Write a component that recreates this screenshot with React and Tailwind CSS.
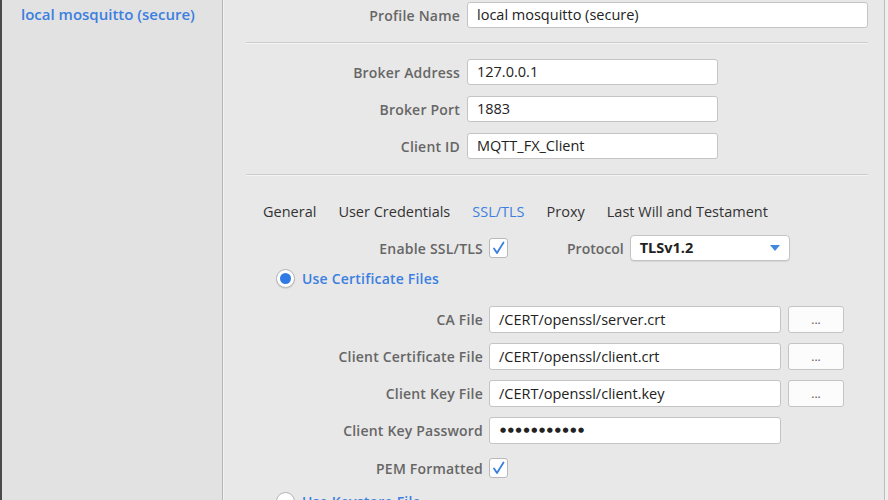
export default function App() {
  const font = { fontFamily: '"Lucida Grande", "Open Sans", "DejaVu Sans", sans-serif' };
  return (
    <div className="w-[888px] h-[500px] overflow-hidden flex bg-[#e8e8e8] text-[14px]" style={font}>
      <div className="w-[2px] bg-[#4a4a4a]" />
      <Sidebar />
      <div className="w-[1px] bg-[#b5b5b5]" />
      <div className="w-[1px] bg-[#f2f2f2]" />
      <main className="flex-1 pl-[22px] pr-[16px] pt-[2px] flex flex-col">
        <Row label="Profile Name" labelW="w-[214px]" gap="gap-[7px]">
          <Field value="local mosquitto (secure)" className="flex-1" />
        </Row>
        <Separator className="mt-[14px] mb-[15px]" />
        <div className="flex flex-col gap-[11px]">
          <Row label="Broker Address" labelW="w-[214px]" gap="gap-[7px]">
            <Field value="127.0.0.1" className="w-[251px]" />
          </Row>
          <Row label="Broker Port" labelW="w-[214px]" gap="gap-[7px]">
            <Field value="1883" className="w-[251px]" />
          </Row>
          <Row label="Client ID" labelW="w-[214px]" gap="gap-[7px]">
            <Field value="MQTT_FX_Client" className="w-[251px]" />
          </Row>
        </div>
        <Separator className="mt-[15px]" />
        <Tabs />
        <div className="flex items-center h-[26px] mt-[13px]">
          <div className="w-[237px] text-right font-semibold text-[#666] tracking-[0.2px]">Enable SSL/TLS</div>
          <div className="ml-[6px]"><Check /></div>
          <div className="ml-[59px] font-semibold text-[#666]">Protocol</div>
          <div className="ml-[6px] w-[160px] h-[26px] bg-white border border-[#c4c4c4] rounded-[4px] shadow-[0_1px_1px_rgba(0,0,0,0.08)] flex items-center justify-between pl-[9px] pr-[9px]">
            <span className="font-bold text-[#222] text-[14.5px]">TLSv1.2</span>
            <svg width="10" height="6" viewBox="0 0 10 6"><path d="M0 0h10L5 6z" fill="#3f87e0" /></svg>
          </div>
        </div>
        <div className="flex items-center mt-[8px] pl-[30px] h-[19px]">
          <Radio on />
          <span className="ml-[7px] font-semibold text-[#3b7fe0] tracking-[0.2px]">Use Certificate Files</span>
        </div>
        <div className="flex flex-col gap-[10px] mt-[18px]">
          <FileRow label="CA File" value="/CERT/openssl/server.crt" />
          <FileRow label="Client Certificate File" value="/CERT/openssl/client.crt" />
          <FileRow label="Client Key File" value="/CERT/openssl/client.key" />
          <Row label="Client Key Password" labelW="w-[237px]" gap="gap-[6px]">
            <div className="w-[292px] h-[27px] bg-white border border-[#c4c4c4] rounded-[3px] flex items-center pl-[10px] text-[#222] text-[7px] tracking-[1.7px]">
              ●●●●●●●●●●●
            </div>
          </Row>
        </div>
        <div className="flex items-center h-[20px] mt-[14px]">
          <div className="w-[237px] text-right font-semibold text-[#666] tracking-[0.2px]">PEM Formatted</div>
          <div className="ml-[6px]"><Check /></div>
        </div>
        <div className="flex items-center mt-[14px] pl-[30px] h-[19px]">
          <Radio />
          <span className="ml-[7px] font-semibold text-[#3b7fe0] tracking-[0.2px]">Use Keystore File</span>
        </div>
      </main>
      <div className="w-[1px] bg-[#bdbdbd]" />
      <div className="w-[3px] bg-[#efefef]" />
    </div>
  );
}

function Sidebar() {
  return (
    <div className="w-[220px] bg-[#e2e2e2] pl-[19px] pt-[3px]">
      <div className="font-semibold text-[#3b7fe0] text-[15px]">local mosquitto (secure)</div>
    </div>
  );
}

function Separator({ className = "" }) {
  return <div className={"h-[2px] border-t border-[#cdcdcd] border-b border-b-[#f4f4f4] " + className} />;
}

function Row({ label, labelW, gap, children }) {
  return (
    <div className={"flex items-center " + gap}>
      <div className={labelW + " text-right font-semibold text-[#666] tracking-[0.2px] shrink-0"}>{label}</div>
      {children}
    </div>
  );
}

function Field({ value, className = "" }) {
  return (
    <div className={"h-[26px] bg-white border border-[#c4c4c4] rounded-[3px] flex items-center pl-[9px] text-[14.5px] text-[#222] " + className}>
      {value}
    </div>
  );
}

function FileRow({ label, value }) {
  return (
    <Row label={label} labelW="w-[237px]" gap="gap-[6px]">
      <Field value={value} className="w-[292px] h-[27px]" />
      <div className="ml-[1px] w-[56px] h-[27px] bg-[#fcfcfc] border border-[#c4c4c4] rounded-[3px] flex items-center justify-center text-[#555] text-[12px]">
        ...
      </div>
    </Row>
  );
}

function Tabs() {
  const tabs = ["General", "User Credentials", "SSL/TLS", "Proxy", "Last Will and Testament"];
  return (
    <div className="flex items-center gap-[22px] pl-[17px] mt-[26px] h-[20px] text-[14.5px]">
      {tabs.map((t) => (
        <span key={t} className={t === "SSL/TLS" ? "text-[#3b7fe0]" : "text-[#333]"}>{t}</span>
      ))}
    </div>
  );
}

function Check() {
  return (
    <div className="w-[19px] h-[20px] bg-white border border-[#b9b9b9] rounded-[3px] flex items-center justify-center">
      <svg width="13" height="14" viewBox="0 0 13 14">
        <path d="M2 7.5 L5 12 L11.5 1.5" fill="none" stroke="#3b7fe0" strokeWidth="1.8" strokeLinecap="round" strokeLinejoin="round" />
      </svg>
    </div>
  );
}

function Radio({ on }) {
  return (
    <div className="w-[19px] h-[19px] rounded-full bg-white border border-[#b5b5b5] flex items-center justify-center shadow-[0_1px_1px_rgba(0,0,0,0.1)]">
      {on && <div className="w-[11px] h-[11px] rounded-full bg-[#2f7ae5]" />}
    </div>
  );
}
